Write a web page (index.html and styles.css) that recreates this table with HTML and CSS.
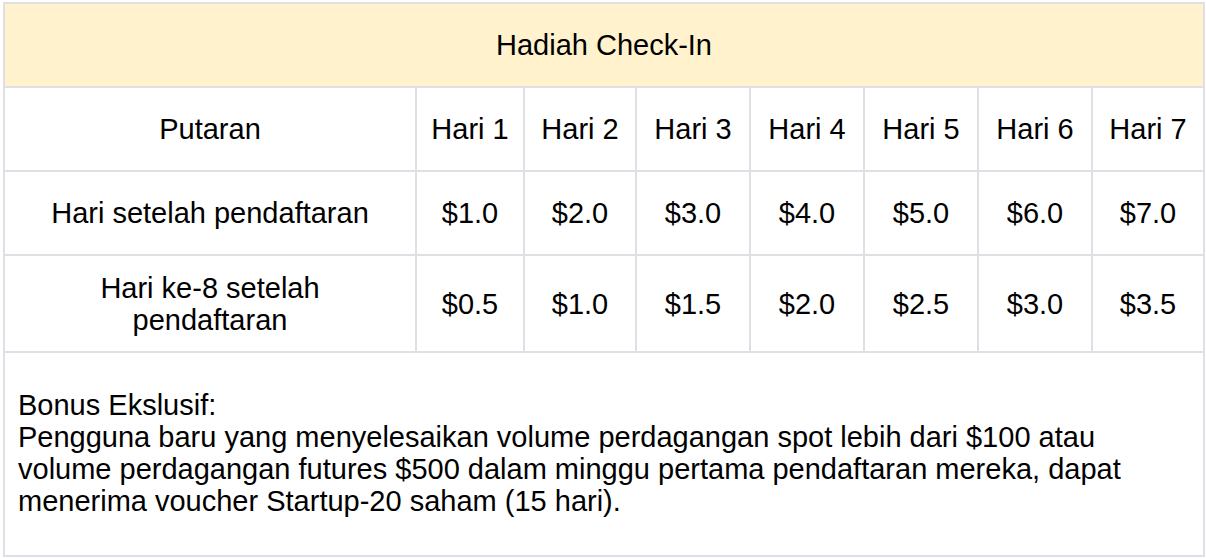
FILE: index.html
```html
<!DOCTYPE html>
<html lang="id">
<head>
<meta charset="utf-8">
<title>Hadiah Check-In</title>
<link rel="stylesheet" href="styles.css">
</head>
<body>
<table class="rewards">
  <colgroup>
    <col class="c-label">
    <col class="c-d2">
    <col class="c-d3">
    <col class="c-d4">
    <col class="c-d4">
    <col class="c-d4">
    <col class="c-d4">
    <col class="c-d3">
  </colgroup>
  <tr class="row-title">
    <td colspan="8">Hadiah Check-In</td>
  </tr>
  <tr class="row">
    <td>Putaran</td>
    <td>Hari 1</td>
    <td>Hari 2</td>
    <td>Hari 3</td>
    <td>Hari 4</td>
    <td>Hari 5</td>
    <td>Hari 6</td>
    <td>Hari 7</td>
  </tr>
  <tr class="row">
    <td>Hari setelah pendaftaran</td>
    <td>$1.0</td>
    <td>$2.0</td>
    <td>$3.0</td>
    <td>$4.0</td>
    <td>$5.0</td>
    <td>$6.0</td>
    <td>$7.0</td>
  </tr>
  <tr class="row row-tall">
    <td>Hari ke-8 setelah<br>pendaftaran</td>
    <td>$0.5</td>
    <td>$1.0</td>
    <td>$1.5</td>
    <td>$2.0</td>
    <td>$2.5</td>
    <td>$3.0</td>
    <td>$3.5</td>
  </tr>
  <tr class="row-note">
    <td colspan="8">Bonus Ekslusif:<br>Pengguna baru yang menyelesaikan volume perdagangan spot lebih dari $100 atau<br>volume perdagangan futures $500 dalam minggu pertama pendaftaran mereka, dapat<br>menerima voucher Startup-20 saham (15 hari).</td>
  </tr>
</table>
</body>
</html>
```

FILE: styles.css
```css
html, body {
  margin: 0;
  padding: 0;
  background: #ffffff;
}

body {
  padding: 2px 0 0 3px;
  font-family: "Liberation Sans", Arial, sans-serif;
  color: #000000;
}

.rewards {
  border-collapse: separate;
  border-spacing: 0;
  table-layout: fixed;
  width: 1202px;
  border-top: 2px solid #dfdfe5;
  border-left: 2px solid #dfdfe5;
  font-size: 29px;
  line-height: 32px;
}

.c-label { width: 412px; }
.c-d2 { width: 108px; }
.c-d3 { width: 112px; }
.c-d4 { width: 114px; }

.rewards td {
  border-right: 2px solid #dfdfe5;
  border-bottom: 2px solid #dfdfe5;
  padding: 0;
  text-align: center;
  vertical-align: middle;
  box-sizing: border-box;
}

.row-title td {
  background: #fff2cc;
  height: 84px;
}

.row td {
  height: 84px;
}

.row-tall td {
  height: 97px;
}

.row-note td {
  height: 204px;
  text-align: left;
  vertical-align: top;
}

.rewards .row-note td {
  padding: 36px 12px 0 13px;
}
```
